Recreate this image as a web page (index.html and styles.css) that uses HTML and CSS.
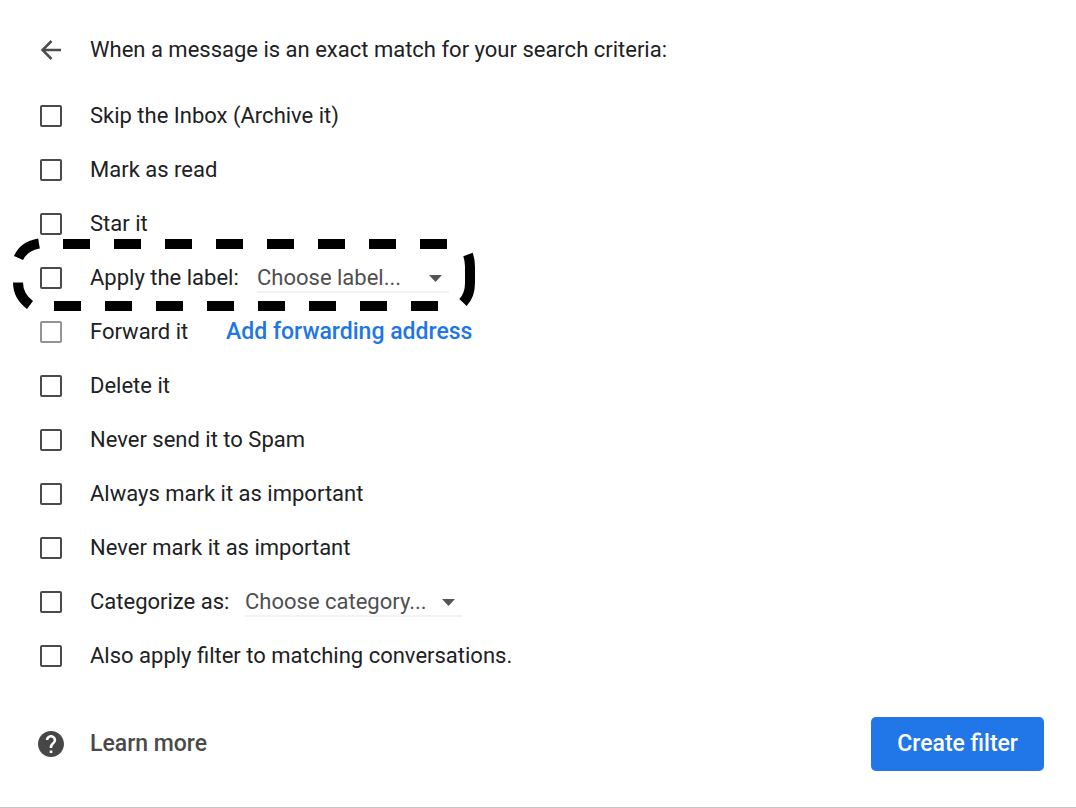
FILE: index.html
```html
<!DOCTYPE html>
<html lang="en">
<head>
<meta charset="utf-8">
<title>Create filter</title>
<link rel="stylesheet" href="styles.css">
</head>
<body>
<form class="filter">
  <header class="header">
    <button class="back" type="button" aria-label="Back">
      <svg class="back-icon" viewBox="0 0 24 24" aria-hidden="true"><path d="M22 12H3.500M12.500 3L3.500 12L12.500 21"/></svg>
    </button>
    <h1 class="title">When a message is an exact match for your search criteria:</h1>
  </header>

  <ul class="options">
    <li class="option"><input class="check" type="checkbox" id="skip"><label for="skip">Skip the Inbox (Archive it)</label></li>
    <li class="option"><input class="check" type="checkbox" id="read"><label for="read">Mark as read</label></li>
    <li class="option"><input class="check" type="checkbox" id="star"><label for="star">Star it</label></li>
    <li class="option">
      <input class="check" type="checkbox" id="apply"><label class="apply-label" for="apply">Apply the label:</label>
      <span class="picker picker-label">
        <select class="select" aria-label="Label"><option>Choose label...</option></select>
        <svg class="caret" viewBox="0 0 13 7" aria-hidden="true"><path d="M0 0H13L6.500 7Z"/></svg>
      </span>
      <svg class="highlight" viewBox="0 0 464 74" aria-hidden="true">
        <path stroke-dasharray="27 24" d="M51 6H435"/>
        <path stroke-dasharray="27 24" d="M42 68H426"/>
        <path d="M6.500 20Q12 8 27 5.500"/>
        <path d="M6 44.500Q6 58 18 67"/>
        <path d="M456 16.500Q458 22 458 29V45Q458 57 451 64.500"/>
      </svg>
    </li>
    <li class="option"><input class="check" type="checkbox" id="forward" disabled><label class="forward-label" for="forward">Forward it</label><a class="link" href="#forwarding">Add forwarding address</a></li>
    <li class="option"><input class="check" type="checkbox" id="delete"><label for="delete">Delete it</label></li>
    <li class="option"><input class="check" type="checkbox" id="spam"><label for="spam">Never send it to Spam</label></li>
    <li class="option"><input class="check" type="checkbox" id="always"><label for="always">Always mark it as important</label></li>
    <li class="option"><input class="check" type="checkbox" id="never"><label for="never">Never mark it as important</label></li>
    <li class="option">
      <input class="check" type="checkbox" id="categorize"><label class="category-label" for="categorize">Categorize as:</label>
      <span class="picker picker-category">
        <select class="select" aria-label="Category"><option>Choose category...</option></select>
        <svg class="caret" viewBox="0 0 13 7" aria-hidden="true"><path d="M0 0H13L6.500 7Z"/></svg>
      </span>
    </li>
    <li class="option"><input class="check" type="checkbox" id="also"><label for="also">Also apply filter to matching conversations.</label></li>
  </ul>

  <footer class="footer">
    <a class="learn" href="#learn">
      <svg class="help" viewBox="2 2 20 20" aria-hidden="true"><path d="M12 2C6.480 2 2 6.480 2 12s4.480 10 10 10 10-4.480 10-10S17.520 2 12 2zm1 17h-2v-2h2v2zm2.070-7.750l-.9.920C13.450 12.900 13 13.500 13 15h-2v-.5c0-1.100.45-2.100 1.170-2.830l1.240-1.260c.37-.36.59-.86.59-1.410 0-1.100-.9-2-2-2s-2 .9-2 2H8c0-2.210 1.790-4 4-4s4 1.790 4 4c0 .88-.36 1.680-.93 2.250z"/></svg>
      <span>Learn more</span>
    </a>
    <button class="create" type="submit">Create filter</button>
  </footer>
</form>
</body>
</html>
```
FILE: styles.css
```css
* {
  box-sizing: border-box;
}

body {
  margin: 0;
  background: #fff;
  color: #202124;
  font: 400 22px/28px Roboto, "Open Sans", sans-serif;
}

.filter {
  min-height: 100vh;
  padding: 16px 32px 36px 38px;
  border-bottom: 1px solid #c4c4c4;
}

.header {
  display: flex;
  align-items: center;
  gap: 26px;
  min-height: 68px;
  margin-bottom: 5px;
}

.back {
  display: flex;
  justify-content: center;
  width: 26px;
  padding: 0;
  border: 0;
  background: none;
}

.back-icon {
  width: 24px;
  height: 24px;
  fill: none;
  stroke: #4d4d4d;
  stroke-width: 2.5;
}

.title {
  margin: 0;
  font-size: inherit;
  font-weight: 400;
}

.options {
  margin: 0;
  padding: 0;
  list-style: none;
}

.option {
  position: relative;
  display: flex;
  align-items: center;
  min-height: 54px;
}

.check {
  appearance: none;
  flex: none;
  width: 22px;
  height: 22px;
  margin: 0 28px 0 2px;
  border: 2px solid #4a4a4a;
  border-radius: 2px;
  background: #fff;
}

.check:checked {
  background: #4a4a4a;
}

.check:disabled {
  border-color: #949494;
}

.apply-label {
  min-width: 167px;
}

.category-label {
  min-width: 155px;
}

.forward-label {
  min-width: 136px;
}

.link {
  color: #2076e8;
  font-size: 23px;
  font-weight: 500;
  text-decoration: none;
}

.picker {
  position: relative;
  display: flex;
  align-items: center;
  min-height: 30px;
  box-shadow: inset 0 -2px #f3f3f3;
}

.picker-label {
  width: 192px;
}

.picker-category {
  width: 217px;
}

.select {
  appearance: none;
  width: 100%;
  padding: 0;
  border: 0;
  background: none;
  color: #505050;
  font: inherit;
}

.caret {
  position: absolute;
  top: 12px;
  right: 7px;
  width: 13px;
  height: 7px;
  fill: #555;
  pointer-events: none;
}

.highlight {
  position: absolute;
  top: -13px;
  left: -26px;
  width: 464px;
  height: 74px;
  fill: none;
  stroke: #000;
  stroke-width: 10;
  pointer-events: none;
}

.footer {
  display: flex;
  align-items: center;
  justify-content: space-between;
  margin-top: 34px;
}

.learn {
  display: flex;
  align-items: center;
  gap: 26px;
  color: #4a4a4a;
  font-size: 23px;
  font-weight: 500;
  text-decoration: none;
}

.help {
  width: 26px;
  height: 26px;
  fill: #474747;
}

.create {
  min-height: 54px;
  padding: 0 26px;
  border: 0;
  border-radius: 5px;
  background: #2176e8;
  color: #fff;
  font: inherit;
  font-size: 23px;
  font-weight: 500;
}
```
